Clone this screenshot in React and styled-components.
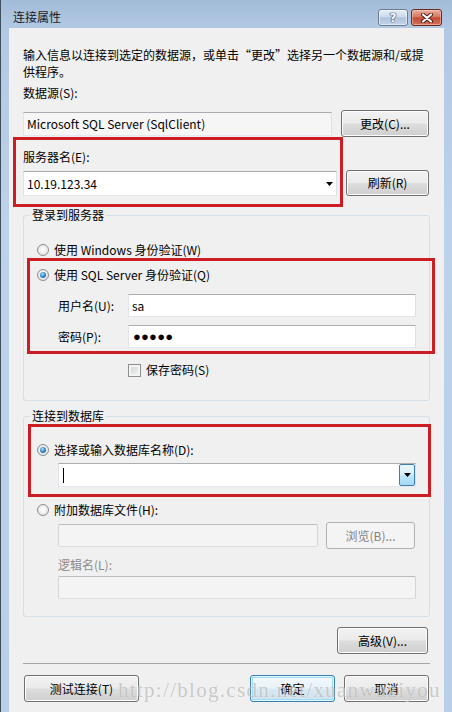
import React from "react";
import styled, { createGlobalStyle, css } from "styled-components";

const Global = createGlobalStyle`
  html, body { margin: 0; padding: 0; width: 452px; height: 712px; overflow: hidden; background: #b9cfe7; }
  body { font-family: "Noto Sans CJK SC", "Noto Sans", sans-serif; font-size: 12px; color: #000; }
  *, *::before, *::after { box-sizing: border-box; }
`;

const Window = styled.div`
  width: 452px;
  height: 712px;
  display: flex;
  flex-direction: column;
  border-left: 1px solid #3f4e5e;
  background: linear-gradient(180deg, #a2bbd8 0%, #b2c9e3 28px, #bcd2ea 220px, #b8cfe8 100%);
`;

const TitleBar = styled.div`
  height: 28px;
  flex: none;
  display: flex;
  align-items: flex-start;
  padding: 0 10px 0 12px;
`;

const Title = styled.div`
  margin-top: 9px;
  font-size: 12px;
  line-height: 16px;
  color: #1b1b1b;
`;

const CaptionGroup = styled.div`
  margin-left: auto;
  margin-top: 9px;
  display: flex;
  gap: 3px;
`;

const CaptionButton = styled.div`
  width: ${(p) => p.$w}px;
  height: 17px;
  display: flex;
  align-items: center;
  justify-content: center;
  border-radius: 3px;
  ${(p) =>
    p.$close
      ? css`
          border: 1px solid #6b2a1f;
          background: linear-gradient(180deg, #eab0a2 0%, #d9785f 45%, #c44b32 52%, #d2725a 100%);
          box-shadow: inset 0 0 0 1px rgba(255, 220, 210, 0.45);
        `
      : css`
          border: 1px solid #6c7d92;
          background: linear-gradient(180deg, #e4edf7 0%, #cddbeb 45%, #afc4dd 52%, #c2d4e8 100%);
          box-shadow: inset 0 0 0 1px rgba(255, 255, 255, 0.5);
        `}
`;

const HelpGlyph = styled.span`
  font-family: "DejaVu Sans", sans-serif;
  font-weight: bold;
  font-size: 12px;
  line-height: 12px;
  color: #fff;
  text-shadow: 0 0 1px #24364c, 0 0 1px #24364c, 0 0 1px #24364c;
`;

const Frame = styled.div`
  flex: 1;
  min-height: 0;
  display: flex;
  padding: 0 8px;
`;

const Client = styled.div`
  flex: 1;
  background: #f0f0f0;
  padding: 18px 14px 0 14px;
  display: flex;
  flex-direction: column;
  overflow: hidden;
`;

const Desc = styled.p`
  margin: 0;
  line-height: 17px;
`;

const FieldLabel = styled.div`
  line-height: ${(p) => p.$lh || 16}px;
  margin-top: ${(p) => p.$mt || 0}px;
  margin-left: ${(p) => p.$ml || 0}px;
  color: ${(p) => (p.$disabled ? "#8d8d8d" : "#000")};
`;

const Row = styled.div`
  display: flex;
  align-items: ${(p) => p.$align || "center"};
  margin-top: ${(p) => p.$mt || 0}px;
  margin-left: ${(p) => p.$ml || 0}px;
`;

const TextBox = styled.div`
  flex: none;
  width: ${(p) => p.$w}px;
  height: ${(p) => p.$h || 23}px;
  margin-top: ${(p) => p.$mt || 0}px;
  margin-left: ${(p) => p.$ml || 0}px;
  padding-left: 3px;
  display: flex;
  align-items: center;
  line-height: 16px;
  border: 1px solid;
  ${(p) =>
    p.$disabled
      ? css`
          background: #f4f4f4;
          border-color: #b9bcc1 #d3d5d9 #dadde1 #d3d5d9;
          border-radius: 2px;
        `
      : p.$readonly
      ? css`
          background: #f6f6f6;
          border-color: #abadb3 #dbdfe6 #e3e9ef #e2e3ea;
        `
      : css`
          background: #fff;
          border-color: #abadb3 #dbdfe6 #e3e9ef #e2e3ea;
        `}
`;

const Dots = styled.span`
  font-family: "Liberation Sans", "DejaVu Sans", sans-serif;
  font-size: 13px;
  letter-spacing: 0.2px;
  margin-left: 1px;
`;

const ComboBox = styled.div`
  flex: none;
  width: ${(p) => p.$w}px;
  height: ${(p) => p.$h}px;
  margin-top: ${(p) => p.$mt || 0}px;
  margin-left: ${(p) => p.$ml || 0}px;
  display: flex;
  align-items: stretch;
  background: #fff;
  border: 1px solid;
  border-color: #abadb3 #dbdfe6 #e3e9ef #e2e3ea;
`;

const ComboText = styled.div`
  flex: 1;
  display: flex;
  align-items: center;
  padding-left: 3px;
  line-height: 16px;
`;

const Caret = styled.span`
  width: 1px;
  height: 15px;
  background: #000;
  margin-left: 1px;
`;

const DropArea = styled.div`
  flex: none;
  width: ${(p) => p.$w}px;
  display: flex;
  align-items: center;
  justify-content: center;
  ${(p) =>
    p.$hot &&
    css`
      border: 1px solid #3c7fb1;
      border-radius: 2px;
      background: linear-gradient(180deg, #eaf6fd 0%, #d9f0fc 45%, #bee6fd 52%, #a7d9f5 100%);
    `}
`;

const Arrow = () => (
  <svg width="7" height="4" viewBox="0 0 7 4">
    <path d="M0 0H7L3.5 4Z" fill="#000" />
  </svg>
);

const PushButton = styled.div`
  flex: none;
  width: ${(p) => p.$w}px;
  height: ${(p) => p.$h || 27}px;
  margin-left: ${(p) => p.$ml || 0}px;
  margin-right: ${(p) => p.$mr || 0}px;
  margin-bottom: ${(p) => p.$mb || 0}px;
  display: flex;
  align-items: center;
  justify-content: center;
  line-height: 16px;
  border-radius: 3px;
  ${(p) =>
    p.$disabled
      ? css`
          color: #838383;
          border: 1px solid #adb2b5;
          background: #f4f4f4;
        `
      : p.$default
      ? css`
          color: #000;
          border: 1px solid #3c7fb1;
          background: linear-gradient(180deg, #f4f9fc 0%, #e9f3f9 48%, #d8e9f3 52%, #cfe2ee 100%);
          box-shadow: inset 0 0 0 1px #dff6ff, inset 0 0 0 2px #9fdcf7;
        `
      : css`
          color: #000;
          border: 1px solid #707070;
          background: linear-gradient(180deg, #f2f2f2 0%, #ebebeb 48%, #dddddd 52%, #cfcfcf 100%);
          box-shadow: inset 0 0 0 1px #fcfcfc;
        `}
`;

const Highlight = styled.div`
  flex: none;
  display: flex;
  flex-direction: column;
  border: 3px solid #cc1c24;
  margin-left: ${(p) => p.$ml || 0}px;
  margin-right: ${(p) => p.$mr || 0}px;
  ${(p) => p.$w && css`width: ${p.$w}px;`}
  padding: ${(p) => p.$pad};
`;

const Group = styled.fieldset`
  margin: ${(p) => p.$mt || 0}px 0 0 0;
  padding: 0 0 ${(p) => p.$pb || 0}px 0;
  min-width: 0;
  border: 1px solid #d5dfe5;
  border-radius: 3px;
  display: flex;
  flex-direction: column;
`;

const Legend = styled.legend`
  margin-left: 6px;
  padding: 0 2px;
  line-height: 16px;
  font-size: 12px;
`;

const OptionRow = styled.div`
  display: flex;
  align-items: center;
  gap: 5px;
  height: 16px;
  line-height: 16px;
  margin-top: ${(p) => p.$mt || 0}px;
  margin-left: ${(p) => p.$ml || 0}px;
`;

const RadioMark = styled.span`
  position: relative;
  flex: none;
  width: 12px;
  height: 12px;
  border-radius: 50%;
  border: 1px solid #8e8f8f;
  background: radial-gradient(circle at 50% 45%, #ffffff 0%, #f0f0f0 45%, #d6d6d6 100%);
  ${(p) =>
    p.$checked &&
    css`
      &::after {
        content: "";
        position: absolute;
        left: 2px;
        top: 2px;
        width: 6px;
        height: 6px;
        border-radius: 50%;
        background: radial-gradient(circle at 40% 35%, #b8e2fb 0%, #3a8fd0 45%, #14507e 100%);
      }
    `}
`;

const CheckMark = styled.span`
  flex: none;
  width: 13px;
  height: 13px;
  border: 1px solid #8e8f8f;
  background: linear-gradient(135deg, #cbcfd5 0%, #f6f6f6 100%);
  box-shadow: inset 0 0 0 2px #f4f4f4;
`;

const InlineLabel = styled.span`
  flex: none;
  width: ${(p) => p.$w}px;
  line-height: 16px;
`;

const Separator = styled.div`
  height: 1px;
  margin-top: 9px;
  background: #a6a6a6;
`;

const ButtonRow = styled.div`
  position: relative;
  display: flex;
  align-items: center;
  margin-top: ${(p) => p.$mt || 0}px;
  justify-content: ${(p) => p.$justify || "flex-start"};
`;

const Watermark = styled.div`
  position: absolute;
  left: 95px;
  top: 5px;
  font-family: "Liberation Serif", serif;
  font-size: 21px;
  line-height: 21px;
  letter-spacing: 1.3px;
  white-space: nowrap;
  color: rgba(130, 130, 130, 0.42);
  text-shadow: 0 0 1px rgba(255, 255, 255, 0.8);
  pointer-events: none;
`;

export default function App() {
  return (
    <>
      <Global />
      <Window>
        <TitleBar>
          <Title>连接属性</Title>
          <CaptionGroup>
            <CaptionButton $w={30}>
              <HelpGlyph>?</HelpGlyph>
            </CaptionButton>
            <CaptionButton $w={31} $close>
              <svg width="14" height="10" viewBox="0 0 14 10">
                <path d="M3 1.5L11 8.5M11 1.5L3 8.5" stroke="#4a1810" strokeWidth="4" strokeLinecap="round" />
                <path d="M3 1.5L11 8.5M11 1.5L3 8.5" stroke="#ffffff" strokeWidth="2.2" strokeLinecap="round" />
              </svg>
            </CaptionButton>
          </CaptionGroup>
        </TitleBar>
        <Frame>
          <Client>
            <Desc>
              输入信息以连接到选定的数据源，或单击“更改”选择另一个数据源和/或提
              <br />
              供程序。
            </Desc>
            <FieldLabel $mt={4} $lh={17}>数据源(S):</FieldLabel>
            <Row $mt={9}>
              <TextBox $readonly $w={309} $h={24}>Microsoft SQL Server (SqlClient)</TextBox>
              <PushButton $w={88} $ml={9}>更改(C)...</PushButton>
            </Row>
            <Row $align="flex-end">
              <Highlight $ml={-10} $w={330} $pad="8px 3px 8px 7px">
                <FieldLabel $lh={17}>服务器名(E):</FieldLabel>
                <ComboBox $mt={6} $w={314} $h={25}>
                  <ComboText>10.19.123.34</ComboText>
                  <DropArea $w={14}>
                    <Arrow />
                  </DropArea>
                </ComboBox>
              </Highlight>
              <PushButton $w={83} $h={26} $ml={3} $mb={11}>刷新(R)</PushButton>
            </Row>

            <Group $pb={22}>
              <Legend>登录到服务器</Legend>
              <OptionRow $mt={19} $ml={13}>
                <RadioMark />
                使用 Windows 身份验证(W)
              </OptionRow>
              <Highlight $ml={3} $mr={-6} $pad="6px 0 3px 0">
                <OptionRow $ml={7}>
                  <RadioMark $checked />
                  使用 SQL Server 身份验证(Q)
                </OptionRow>
                <Row $mt={11} $ml={28}>
                  <InlineLabel $w={70}>用户名(U):</InlineLabel>
                  <TextBox $w={288}>sa</TextBox>
                </Row>
                <Row $mt={8} $ml={28}>
                  <InlineLabel $w={70}>密码(P):</InlineLabel>
                  <TextBox $w={288}>
                    <Dots>●●●●●</Dots>
                  </TextBox>
                </Row>
              </Highlight>
              <OptionRow $mt={8} $ml={104}>
                <CheckMark />
                保存密码(S)
              </OptionRow>
            </Group>

            <Group $mt={7} $pb={17}>
              <Legend>连接到数据库</Legend>
              <Highlight $ml={4} $mr={-2} $pad="15px 0 7px 0">
                <OptionRow $ml={6}>
                  <RadioMark $checked />
                  选择或输入数据库名称(D):
                </OptionRow>
                <ComboBox $mt={5} $ml={27} $w={358} $h={24}>
                  <ComboText>
                    <Caret />
                  </ComboText>
                  <DropArea $w={16} $hot>
                    <Arrow />
                  </DropArea>
                </ComboBox>
              </Highlight>
              <OptionRow $mt={5} $ml={13}>
                <RadioMark />
                附加数据库文件(H):
              </OptionRow>
              <Row $mt={4} $ml={34}>
                <TextBox $disabled $w={260} />
                <PushButton $disabled $w={89} $ml={8}>浏览(B)...</PushButton>
              </Row>
              <FieldLabel $mt={8} $ml={34} $disabled>逻辑名(L):</FieldLabel>
              <TextBox $disabled $mt={3} $ml={34} $w={358} />
            </Group>

            <ButtonRow $mt={10} $justify="flex-end">
              <PushButton $w={91} $mr={2}>高级(V)...</PushButton>
            </ButtonRow>
            <Separator />
            <ButtonRow $mt={11}>
              <PushButton $w={115} $ml={1}>测试连接(T)</PushButton>
              <PushButton $w={85} $ml={111} $default>确定</PushButton>
              <PushButton $w={85} $ml={9}>取消</PushButton>
              <Watermark>http://blog.csdn.net/xuanwuziyou</Watermark>
            </ButtonRow>
          </Client>
        </Frame>
      </Window>
    </>
  );
}
